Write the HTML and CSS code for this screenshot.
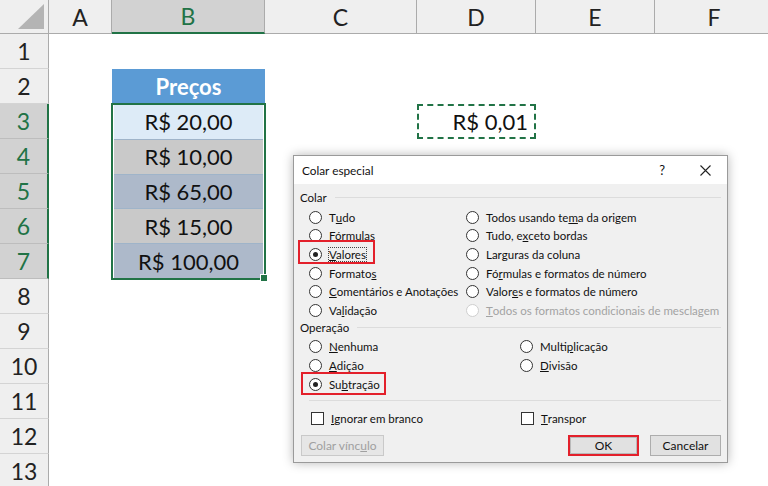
FILE: index.html
```html
<!DOCTYPE html>
<html lang="pt-BR">
<head>
    <meta charset="UTF-8">
    <title>Colar especial - Subtração</title>
    <link rel="stylesheet" href="styles.css">
</head>
<body>
<div class="screen">
    <div class="sheet">
        <!-- cabeçalho das colunas -->
        <div class="corner"><span class="tri"></span></div>
        <div class="ch">A</div>
        <div class="ch ch-sel">B</div>
        <div class="ch">C</div>
        <div class="ch">D</div>
        <div class="ch">E</div>
        <div class="ch">F</div>

        <div class="rh">1</div><div class="c"></div><div class="c"></div><div class="c"></div><div class="c"></div><div class="c"></div><div class="c"></div>

        <div class="rh">2</div><div class="c"></div>
        <div class="c th">Preços</div>
        <div class="c"></div><div class="c"></div><div class="c"></div><div class="c"></div>

        <div class="rh rh-sel">3</div><div class="c"></div>
        <div class="range">
            <div class="val v-active">R$ 20,00</div>
            <div class="val v-gray">R$ 10,00</div>
            <div class="val v-blue">R$ 65,00</div>
            <div class="val v-gray">R$ 15,00</div>
            <div class="val v-blue">R$ 100,00</div>
            <span class="handle"></span>
        </div>
        <div class="c"></div>
        <div class="c copied">R$ 0,01</div>
        <div class="c"></div><div class="c"></div>

        <div class="rh rh-sel">4</div><div class="c"></div><div class="c"></div><div class="c"></div><div class="c"></div><div class="c"></div>
        <div class="rh rh-sel">5</div><div class="c"></div><div class="c"></div><div class="c"></div><div class="c"></div><div class="c"></div>
        <div class="rh rh-sel">6</div><div class="c"></div><div class="c"></div><div class="c"></div><div class="c"></div><div class="c"></div>
        <div class="rh rh-sel">7</div><div class="c"></div><div class="c"></div><div class="c"></div><div class="c"></div><div class="c"></div>
        <div class="rh">8</div><div class="c"></div><div class="c"></div><div class="c"></div><div class="c"></div><div class="c"></div><div class="c"></div>
        <div class="rh">9</div><div class="c"></div><div class="c"></div><div class="c"></div><div class="c"></div><div class="c"></div><div class="c"></div>
        <div class="rh">10</div><div class="c"></div><div class="c"></div><div class="c"></div><div class="c"></div><div class="c"></div><div class="c"></div>
        <div class="rh">11</div><div class="c"></div><div class="c"></div><div class="c"></div><div class="c"></div><div class="c"></div><div class="c"></div>
        <div class="rh">12</div><div class="c"></div><div class="c"></div><div class="c"></div><div class="c"></div><div class="c"></div><div class="c"></div>
        <div class="rh">13</div><div class="c"></div><div class="c"></div><div class="c"></div><div class="c"></div><div class="c"></div><div class="c"></div>
    </div>

    <!-- janela Colar especial -->
    <div class="dialog">
        <div class="titlebar">
            <span class="title">Colar especial</span>
            <span class="help">?</span>
            <svg class="close" width="11" height="11" viewBox="0 0 11 11">
                <path d="M0.5 0.5L10.5 10.5M10.5 0.5L0.5 10.5" stroke="#222" stroke-width="1.1" fill="none"/>
            </svg>
        </div>
        <div class="dbody">
            <div class="legend"><span>Colar</span><i class="rule"></i></div>
            <div class="opts opts-paste">
                <div class="opt"><span class="radio"></span>T<u>u</u>do</div>
                <div class="opt"><span class="radio"></span>Todos usando te<u>m</u>a da origem</div>
                <div class="opt"><span class="radio"></span>Fórmu<u>l</u>as</div>
                <div class="opt"><span class="radio"></span>Tudo, e<u>x</u>ceto bordas</div>
                <div class="opt mark-valores"><span class="radio on"></span><span class="focus"><u>V</u>alores</span></div>
                <div class="opt"><span class="radio"></span>Lar<u>g</u>uras da coluna</div>
                <div class="opt"><span class="radio"></span>Formato<u>s</u></div>
                <div class="opt"><span class="radio"></span>Fó<u>r</u>mulas e formatos de número</div>
                <div class="opt"><span class="radio"></span><u>C</u>omentários e Anotações</div>
                <div class="opt"><span class="radio"></span>Valor<u>e</u>s e formatos de número</div>
                <div class="opt"><span class="radio"></span>Va<u>l</u>idação</div>
                <div class="opt off"><span class="radio"></span><u>T</u>odos os formatos condicionais de mesclagem</div>
            </div>

            <div class="legend legend-op"><span>Operação</span><i class="rule"></i></div>
            <div class="opts opts-op">
                <div class="opt"><span class="radio"></span><u>N</u>enhuma</div>
                <div class="opt"><span class="radio"></span>Multi<u>p</u>licação</div>
                <div class="opt"><span class="radio"></span><u>A</u>dição</div>
                <div class="opt"><span class="radio"></span><u>D</u>ivisão</div>
                <div class="opt mark-sub"><span class="radio on"></span>Su<u>b</u>tração</div>
            </div>

            <div class="sep"></div>

            <div class="opts opts-check">
                <div class="opt"><span class="check"></span><u>I</u>gnorar em branco</div>
                <div class="opt"><span class="check"></span><u>T</u>ranspor</div>
            </div>

            <div class="buttons">
                <button class="btn btn-off">Colar vínc<u>u</u>lo</button>
                <span class="spacer"></span>
                <button class="btn btn-ok">OK</button>
                <button class="btn">Cancelar</button>
            </div>
        </div>
    </div>
</div>
</body>
</html>
```

FILE: styles.css
```css
body {
    margin: 0;
    background: #ffffff;
}

.screen {
    position: relative;
    width: 768px;
    height: 486px;
    overflow: hidden;
    font-family: Lato, "Open Sans", sans-serif;
}

/* planilha */
.sheet {
    display: grid;
    grid-template-columns: 49px 63px 153px 152px 119px 119px 119px;
    grid-template-rows: 34px repeat(13, 35px);
    background: #ffffff;
}

.corner {
    background: #efefef;
    border-right: 1px solid #ababab;
    border-bottom: 1px solid #ababab;
    box-sizing: border-box;
    position: relative;
}
.tri {
    position: absolute;
    right: 4px;
    bottom: 4px;
    width: 0;
    height: 0;
    border-left: 26px solid transparent;
    border-bottom: 25px solid #b4b4b4;
}

.ch {
    background: #efefef;
    border-right: 1px solid #ababab;
    border-bottom: 1px solid #ababab;
    box-sizing: border-box;
    display: flex;
    align-items: center;
    justify-content: center;
    font-size: 23px;
    color: #222;
}
.ch-sel {
    background: #d2d2d2;
    color: #217346;
    border-bottom: 2px solid #217346;
}

.rh {
    background: #efefef;
    border-right: 1px solid #ababab;
    border-bottom: 1px solid #d4d4d4;
    box-sizing: border-box;
    display: flex;
    align-items: center;
    justify-content: center;
    font-size: 23px;
    color: #222;
}
.rh-sel {
    background: #d2d2d2;
    color: #217346;
    border-right: 2px solid #217346;
    border-bottom-color: #bdbdbd;
}

.c {
    box-sizing: border-box;
    font-size: 22px;
    color: #111;
}

.th {
    background: #5b9bd5;
    color: #ffffff;
    font-weight: bold;
    display: flex;
    align-items: center;
    justify-content: center;
    border-bottom: 1px solid #9dc3e6;
}

.range {
    grid-row: span 5;
    display: flex;
    flex-direction: column;
    position: relative;
    outline: 2px solid #217346;
    outline-offset: -1px;
    padding: 1px 2px 1px 2px;
    box-sizing: border-box;
    background: #ffffff;
}
.val {
    flex: 1;
    display: flex;
    align-items: center;
    justify-content: center;
    font-size: 22px;
    color: #111;
    border-top: 1px solid #9fb4c9;
}
.val:first-child {
    border-top: none;
}
.v-active { background: #ddebf7; }
.v-gray { background: #c9c9c9; }
.v-blue { background: #adb9ca; }

.handle {
    position: absolute;
    right: -3px;
    bottom: -3px;
    width: 6px;
    height: 6px;
    background: #217346;
    border: 1px solid #ffffff;
}

.copied {
    border: 2px dashed #217346;
    display: flex;
    align-items: center;
    justify-content: flex-end;
    padding-right: 6px;
}

/* janela */
.dialog {
    position: absolute;
    left: 293px;
    top: 155px;
    width: 435px;
    height: 308px;
    box-sizing: border-box;
    border: 1px solid #9a9a9a;
    background: #f0f0f0;
    box-shadow: 0 0 10px rgba(0, 0, 0, 0.28);
    font-family: Lato, "Open Sans", sans-serif;
    font-size: 11.5px;
    color: #111;
}

.titlebar {
    height: 28px;
    background: #ffffff;
    display: flex;
    align-items: center;
    padding: 0 16px 0 8px;
}
.title {
    flex: 1;
    font-size: 11.8px;
}
.help {
    font-size: 13px;
    margin-right: 35px;
}

.dbody {
    padding: 5px 6px 0 6px;
}

.legend {
    display: flex;
    align-items: center;
    height: 16px;
}
.rule {
    flex: 1;
    height: 1px;
    background: #dcdcdc;
    margin-left: 8px;
}
.legend-op {
    margin-top: 0;
}

.opts {
    display: grid;
    grid-auto-rows: 18.6px;
    margin-top: 3px;
}
.opts-paste { grid-template-columns: 157px 1fr; }
.opts-op { grid-template-columns: 211px 1fr; margin-top: 2px; }
.opts-check { grid-template-columns: 210px 1fr; margin-top: 8px; }

.opt {
    display: flex;
    align-items: center;
    padding-left: 9px;
    position: relative;
    white-space: nowrap;
}
.opt.off {
    color: #a3a3a3;
}

.radio {
    width: 13px;
    height: 13px;
    box-sizing: border-box;
    border: 1px solid #333;
    border-radius: 50%;
    background: #ffffff;
    margin-right: 7px;
    display: flex;
    align-items: center;
    justify-content: center;
    flex: none;
}
.radio.on::after {
    content: "";
    width: 5px;
    height: 5px;
    border-radius: 50%;
    background: #222;
}
.opt.off .radio {
    border-color: #cfcfcf;
}

.check {
    width: 13px;
    height: 13px;
    box-sizing: border-box;
    border: 1px solid #333;
    background: #ffffff;
    margin-right: 7px;
    flex: none;
}
.opts-check .opt {
    padding-left: 11px;
}

.focus {
    outline: 1px dotted #444;
    outline-offset: 0;
}

.mark-valores::after,
.mark-sub::after {
    content: "";
    position: absolute;
    border: 2px solid #e3202b;
    box-sizing: border-box;
}
.mark-valores::after {
    left: -2px;
    top: -5px;
    width: 77px;
    height: 24px;
}
.mark-sub::after {
    left: 1px;
    top: -3px;
    width: 85px;
    height: 23px;
}

.sep {
    height: 1px;
    background: #dcdcdc;
    margin: 7px 0 0 9px;
}

.buttons {
    display: flex;
    margin-top: 7px;
}
.spacer {
    flex: 1;
}
.btn {
    width: 71px;
    height: 21px;
    box-sizing: border-box;
    border: 1px solid #adadad;
    background: #e1e1e1;
    font-family: Lato, "Open Sans", sans-serif;
    font-size: 12px;
    color: #111;
    padding: 0;
    margin-left: 11px;
}
.btn-off {
    width: 83px;
    margin-left: 1px;
    color: #a0a0a0;
    background: #e6e6e6;
    border-color: #c9c9c9;
}
.btn-ok {
    border: 2px solid #e3202b;
    box-shadow: inset 0 0 0 1px #b9b9b9;
}
```
